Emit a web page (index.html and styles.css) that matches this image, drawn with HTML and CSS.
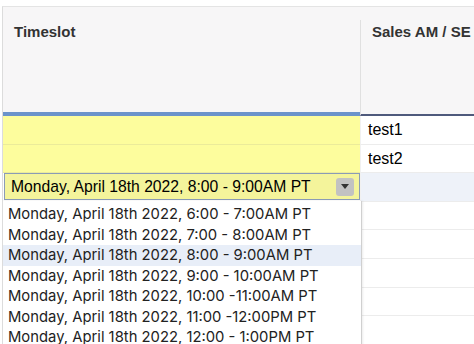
FILE: index.html
```html
<!DOCTYPE html>
<html>
<head>
<meta charset="utf-8">
<link rel="stylesheet" href="styles.css">
</head>
<body>
<div class="table">
  <div class="head">
    <div class="hcell c1">Timeslot</div>
    <div class="hcell c2">Sales AM / SE</div>
  </div>
  <div class="row">
    <div class="cell c1 yellow"></div>
    <div class="cell c2">test1</div>
  </div>
  <div class="row">
    <div class="cell c1 yellow"></div>
    <div class="cell c2">test2</div>
  </div>
  <div class="row editing">
    <div class="cell c1 edit-cell">
      <div class="select">
        <span class="select-text">Monday, April 18th 2022, 8:00 - 9:00AM PT</span>
        <span class="select-btn"><svg width="8" height="5" viewBox="0 0 8 5"><path d="M0 0H8L4 5Z" fill="#333"/></svg></span>
      </div>
    </div>
    <div class="cell c2 active"></div>
  </div>
  <div class="row"><div class="cell c1"></div><div class="cell c2"></div></div>
  <div class="row"><div class="cell c1"></div><div class="cell c2"></div></div>
  <div class="row"><div class="cell c1"></div><div class="cell c2"></div></div>
  <div class="row"><div class="cell c1"></div><div class="cell c2"></div></div>
  <div class="row"><div class="cell c1"></div><div class="cell c2"></div></div>
  <ul class="dropdown">
    <li>Monday, April 18th 2022, 6:00 - 7:00AM PT</li>
    <li>Monday, April 18th 2022, 7:00 - 8:00AM PT</li>
    <li class="hl">Monday, April 18th 2022, 8:00 - 9:00AM PT</li>
    <li>Monday, April 18th 2022, 9:00 - 10:00AM PT</li>
    <li>Monday, April 18th 2022, 10:00 -11:00AM PT</li>
    <li>Monday, April 18th 2022, 11:00 -12:00PM PT</li>
    <li>Monday, April 18th 2022, 12:00 - 1:00PM PT</li>
  </ul>
</div>
</body>
</html>
```
FILE: styles.css
```css
html, body {
  margin: 0;
  padding: 0;
  background: #ffffff;
  overflow: hidden;
  height: 344px;
}
body {
  font-family: "Liberation Sans", Arial, sans-serif;
  color: #000;
}
.table {
  position: relative;
  margin-top: 6px;
  margin-left: 2px;
  border-top: 1px solid #e4e4e4;
  border-left: 1px solid #dcdcdc;
  height: 337px;
  overflow: hidden;
}
.head {
  display: flex;
  height: 109px;
  background: #f7f6f7;
}
.hcell {
  box-sizing: border-box;
  height: 109px;
  font-weight: bold;
  font-size: 15px;
  line-height: 18px;
  color: #333;
  padding-top: 16px;
}
.head .c1 {
  width: 357px;
  padding-left: 11px;
  border-bottom: 4px solid #6b93cb;
}
.head .c2 {
  position: relative;
  flex: 1;
  padding-left: 11px;
  border-bottom: 2px solid #4f5a7c;
  border-left: 1px solid transparent;
  white-space: nowrap;
}
.head .c2::before {
  content: "";
  position: absolute;
  left: -1px;
  top: 13px;
  bottom: 0;
  width: 1px;
  background: #e0e0e0;
}
.row {
  display: flex;
  height: 28.6px;
}
.cell {
  box-sizing: border-box;
  height: 28.6px;
  border-bottom: 1px solid #ececec;
  font-size: 16px;
  line-height: 28px;
}
.row .c1 {
  width: 357px;
}
.row .c2 {
  flex: 1;
  padding-left: 7px;
  border-left: 1px solid #f1f1f1;
}
.yellow {
  background: #fdfd9d;
  border-bottom-color: #ebeb9a;
}
.active {
  background: #eef2f9;
}
.edit-cell {
  padding: 0 0 1px 1px;
}
.select {
  box-sizing: border-box;
  height: 27px;
  display: flex;
  align-items: center;
  background: #f4f49b;
  border: 1px solid #8a9bb6;
  padding-left: 6px;
  padding-right: 5px;
}
.select-text {
  flex: 1;
  font-size: 15.7px;
  color: #000;
  white-space: nowrap;
}
.select-btn {
  width: 18px;
  height: 18px;
  border-radius: 3px;
  background: #c2c2c2;
  display: flex;
  align-items: center;
  justify-content: center;
}
.dropdown {
  position: absolute;
  top: 194px;
  left: -1px;
  width: 359px;
  margin: 0;
  padding: 3px 0 0 0;
  list-style: none;
  background: #fff;
  border-right: 1px solid #d0d0d0;
  box-shadow: 1px 0 2px rgba(0,0,0,0.08);
  height: 200px;
}
.dropdown li {
  height: 20.5px;
  line-height: 20.5px;
  padding-left: 6px;
  font-family: "Inter", "Liberation Sans", sans-serif;
  font-size: 14.8px;
  color: #222;
  white-space: nowrap;
}
.dropdown li.hl {
  background: #e8eef8;
}
```
